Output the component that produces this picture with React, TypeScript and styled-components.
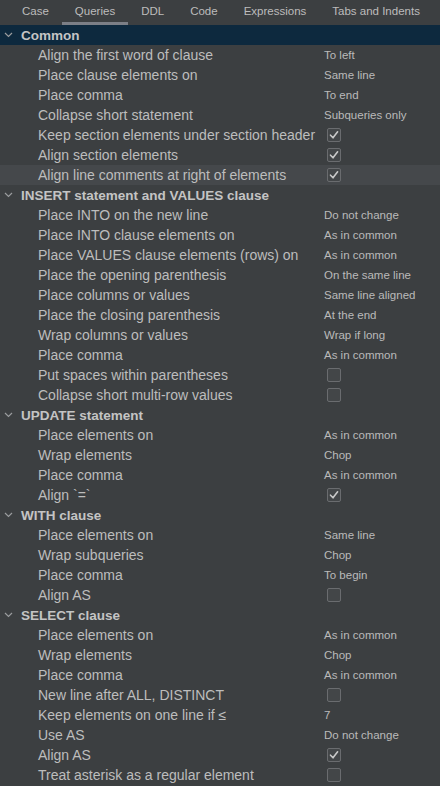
import React from "react";
import styled, { createGlobalStyle } from "styled-components";

const GlobalStyle = createGlobalStyle`
  html, body {
    margin: 0;
    padding: 0;
    background: #3c3f41;
  }
  body {
    font-family: "Liberation Sans", Arial, sans-serif;
  }
`;

const Panel = styled.div`
  width: 440px;
  height: 786px;
  overflow: hidden;
  background-color: #3c3f41;
`;

const TabBar = styled.div`
  display: flex;
  height: 25px;
  padding-left: 9px;
  background-color: #3c3f41;
`;

const Tab = styled.div<{ $active?: boolean }>`
  position: relative;
  display: flex;
  align-items: center;
  padding: 0 13px 3px;
  font-size: 11.5px;
  color: #bcbcbc;
  white-space: nowrap;
  &::after {
    content: "";
    position: absolute;
    left: 0;
    right: 0;
    bottom: 0;
    height: 3px;
    background-color: ${({ $active }) => ($active ? "#7c7f86" : "transparent")};
  }
`;

const Row = styled.div<{ $selected?: boolean; $hover?: boolean }>`
  display: flex;
  align-items: center;
  height: 20px;
  background-color: ${({ $selected, $hover }) =>
    $selected ? "#0d293e" : $hover ? "#45484b" : "transparent"};
`;

const Chevron = styled.svg`
  width: 9px;
  height: 6px;
  margin: 0 8px 0 4px;
  flex: none;
`;

const HeaderText = styled.span`
  font-size: 13.5px;
  font-weight: bold;
  color: #c4c4c4;
  white-space: nowrap;
`;

const Label = styled.span`
  width: 286px;
  padding-left: 38px;
  flex: none;
  font-size: 14px;
  color: #bdbdbd;
  white-space: nowrap;
`;

const Value = styled.span`
  font-size: 11.5px;
  color: #bababa;
  white-space: nowrap;
`;

const Box = styled.span`
  display: inline-flex;
  align-items: center;
  justify-content: center;
  width: 12px;
  height: 12px;
  margin-left: 3px;
  border: 1px solid #6a6c6f;
  border-radius: 2px;
  background-color: #434648;
`;

type Item = { label: string; value?: string; check?: boolean; hover?: boolean };
type Section = { title: string; selected?: boolean; items: Item[] };

const sections: Section[] = [
  {
    title: "Common",
    selected: true,
    items: [
      { label: "Align the first word of clause", value: "To left" },
      { label: "Place clause elements on", value: "Same line" },
      { label: "Place comma", value: "To end" },
      { label: "Collapse short statement", value: "Subqueries only" },
      { label: "Keep section elements under section header", check: true },
      { label: "Align section elements", check: true },
      { label: "Align line comments at right of elements", check: true, hover: true },
    ],
  },
  {
    title: "INSERT statement and VALUES clause",
    items: [
      { label: "Place INTO on the new line", value: "Do not change" },
      { label: "Place INTO clause elements on", value: "As in common" },
      { label: "Place VALUES clause elements (rows) on", value: "As in common" },
      { label: "Place the opening parenthesis", value: "On the same line" },
      { label: "Place columns or values", value: "Same line aligned" },
      { label: "Place the closing parenthesis", value: "At the end" },
      { label: "Wrap columns or values", value: "Wrap if long" },
      { label: "Place comma", value: "As in common" },
      { label: "Put spaces within parentheses", check: false },
      { label: "Collapse short multi-row values", check: false },
    ],
  },
  {
    title: "UPDATE statement",
    items: [
      { label: "Place elements on", value: "As in common" },
      { label: "Wrap elements", value: "Chop" },
      { label: "Place comma", value: "As in common" },
      { label: "Align `=`", check: true },
    ],
  },
  {
    title: "WITH clause",
    items: [
      { label: "Place elements on", value: "Same line" },
      { label: "Wrap subqueries", value: "Chop" },
      { label: "Place comma", value: "To begin" },
      { label: "Align AS", check: false },
    ],
  },
  {
    title: "SELECT clause",
    items: [
      { label: "Place elements on", value: "As in common" },
      { label: "Wrap elements", value: "Chop" },
      { label: "Place comma", value: "As in common" },
      { label: "New line after ALL, DISTINCT", check: false },
      { label: "Keep elements on one line if \u2264", value: "7" },
      { label: "Use AS", value: "Do not change" },
      { label: "Align AS", check: true },
      { label: "Treat asterisk as a regular element", check: false },
    ],
  },
];

const tabs = ["Case", "Queries", "DDL", "Code", "Expressions", "Tabs and Indents"];

function Checkbox({ checked }: { checked: boolean }) {
  return (
    <Box>
      {checked && (
        <svg width="10" height="10" viewBox="0 0 10 10">
          <path d="M1.5 5.2 L4 7.8 L8.6 1.8" fill="none" stroke="#c9c9c9" strokeWidth="1.6" strokeLinecap="round" strokeLinejoin="round" />
        </svg>
      )}
    </Box>
  );
}

export default function App() {
  return (
    <Panel>
      <GlobalStyle />
      <TabBar>
        {tabs.map((t) => (
          <Tab key={t} $active={t === "Queries"}>
            {t}
          </Tab>
        ))}
      </TabBar>
      {sections.map((s) => (
        <React.Fragment key={s.title}>
          <Row $selected={s.selected}>
            <Chevron viewBox="0 0 9 6">
              <path d="M1 1 L4.5 4.5 L8 1" fill="none" stroke="#9a9c9e" strokeWidth="1.2" />
            </Chevron>
            <HeaderText>{s.title}</HeaderText>
          </Row>
          {s.items.map((it, i) => (
            <Row key={i} $hover={it.hover}>
              <Label>{it.label}</Label>
              {it.value !== undefined ? <Value>{it.value}</Value> : <Checkbox checked={!!it.check} />}
            </Row>
          ))}
        </React.Fragment>
      ))}
    </Panel>
  );
}
